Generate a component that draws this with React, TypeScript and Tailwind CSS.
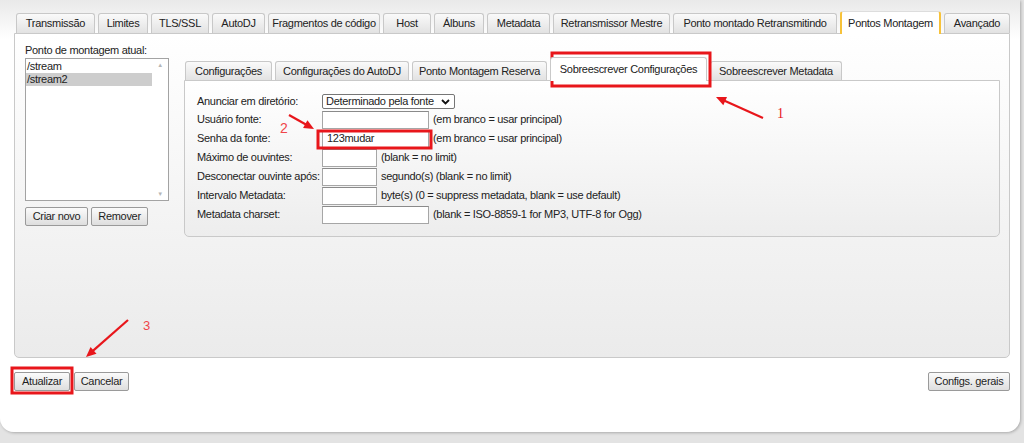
import React from 'react';

const mainTabs = [
  { label: 'Transmissão', w: 79 },
  { label: 'Limites', w: 50 },
  { label: 'TLS/SSL', w: 58 },
  { label: 'AutoDJ', w: 53 },
  { label: 'Fragmentos de código', w: 112 },
  { label: 'Host', w: 48 },
  { label: 'Álbuns', w: 50 },
  { label: 'Metadata', w: 63 },
  { label: 'Retransmissor Mestre', w: 117 },
  { label: 'Ponto montado Retransmitindo', w: 164 },
  { label: 'Pontos Montagem', w: 101, active: true },
  { label: 'Avançado', w: 66 },
];

const subTabs = [
  { label: 'Configurações', w: 87 },
  { label: 'Configurações do AutoDJ', w: 134 },
  { label: 'Ponto Montagem Reserva', w: 135 },
  { label: 'Sobreescrever Configurações', w: 157, active: true },
  { label: 'Sobreescrever Metadata', w: 132 },
];

const rows = [
  { label: 'Usuário fonte:', w: 107, value: '', hint: '(em branco = usar principal)' },
  { label: 'Senha da fonte:', w: 107, value: '123mudar', hint: '(em branco = usar principal)' },
  { label: 'Máximo de ouvintes:', w: 55, value: '', hint: '(blank = no limit)' },
  { label: 'Desconectar ouvinte após:', w: 55, value: '', hint: 'segundo(s) (blank = no limit)' },
  { label: 'Intervalo Metadata:', w: 55, value: '', hint: 'byte(s) (0 = suppress metadata, blank = use default)' },
  { label: 'Metadata charset:', w: 107, value: '', hint: '(blank = ISO-8859-1 for MP3, UTF-8 for Ogg)' },
];

const Btn: React.FC<{ label: string; w: number }> = ({ label, w }) => (
  <button
    style={{ width: w }}
    className="h-[19px] border border-[#9a9a9a] rounded-[2px] bg-linear-to-b from-[#fbfbfb] to-[#dedede] text-[#1e1e1e] leading-none"
  >
    {label}
  </button>
);

// red annotation arrow, head at (x2, y2)
const Arrow: React.FC<{ x1: number; y1: number; x2: number; y2: number }> = ({ x1, y1, x2, y2 }) => {
  const a = Math.atan2(y2 - y1, x2 - x1);
  const len = 11;
  const spread = 0.42;
  const bx = x2 - Math.cos(a) * len * 0.8;
  const by = y2 - Math.sin(a) * len * 0.8;
  const p1 = `${x2 - Math.cos(a - spread) * len},${y2 - Math.sin(a - spread) * len}`;
  const p2 = `${x2 - Math.cos(a + spread) * len},${y2 - Math.sin(a + spread) * len}`;
  return (
    <g>
      <line x1={x1} y1={y1} x2={bx} y2={by} stroke="#e8161b" strokeWidth={2.2} />
      <polygon points={`${x2},${y2} ${p1} ${p2}`} fill="#e8161b" />
    </g>
  );
};

export default function App() {
  return (
    <div className="relative w-[1024px] h-[443px] overflow-hidden bg-[#e3e3e3] font-['Liberation_Sans',Arial,sans-serif] text-[11px] tracking-[-0.3px] text-[#222]">
      <div className="w-[1020px] h-[432px] rounded-b-[14px] bg-linear-to-b from-[#e9e9e9] via-white via-[9%] to-white shadow-[1px_1px_3px_rgba(0,0,0,0.25)]">
        {/* main tabs */}
        <div className="flex items-end pl-[16px] pt-[11px] gap-[3px]">
          {mainTabs.map((t) =>
            t.active ? (
              <div
                key={t.label}
                style={{ width: t.w }}
                className="relative z-10 h-[23px] -mb-px flex items-center justify-center bg-white border-t border-[#ddd] border-x-2 border-x-[#f7c23a] rounded-t-[3px]"
              >
                {t.label}
              </div>
            ) : (
              <div
                key={t.label}
                style={{ width: t.w }}
                className="h-[20px] flex items-center justify-center border border-b-0 border-[#c8c8c8] rounded-t-[3px] bg-linear-to-b from-[#fafafa] to-[#e2e2e2]"
              >
                {t.label}
              </div>
            )
          )}
        </div>

        {/* main panel */}
        <div className="ml-[14px] w-[996px] h-[325px] border border-[#c9c9c9] rounded-b-[5px] bg-linear-to-b from-white to-[#ebebeb] flex pl-[10px] pt-[10px]">
          {/* mount point list */}
          <div className="w-[144px] flex flex-col">
            <div className="h-[14px] leading-[12px]">Ponto de montagem atual:</div>
            <div className="relative h-[143px] border border-[#a3a3a3] bg-white flex">
              <div className="flex-1 pt-[1px]">
                <div className="h-[13px] leading-[12px] pl-[1px]">/stream</div>
                <div className="h-[13px] leading-[12px] pl-[1px] bg-[#cdcdcd]">/stream2</div>
              </div>
              <div className="w-[16px] flex flex-col justify-between items-center py-[3px] text-[#b5b5b5] text-[6px] leading-none">
                <span>▲</span>
                <span>▼</span>
              </div>
            </div>
            <div className="flex gap-[3px] mt-[6px]">
              <Btn label="Criar novo" w={63} />
              <Btn label="Remover" w={57} />
            </div>
          </div>

          {/* override settings */}
          <div className="ml-[15px] mt-[13px] flex flex-col">
            <div className="flex items-end pl-px gap-[3px]">
              {subTabs.map((t) =>
                t.active ? (
                  <div
                    key={t.label}
                    style={{ width: t.w }}
                    className="relative z-10 h-[24px] -mb-px flex items-center justify-center bg-white border border-b-0 border-[#c9c9c9] rounded-t-[3px]"
                  >
                    {t.label}
                  </div>
                ) : (
                  <div
                    key={t.label}
                    style={{ width: t.w }}
                    className="h-[19px] flex items-center justify-center border border-b-0 border-[#c8c8c8] rounded-t-[3px] bg-linear-to-b from-[#fafafa] to-[#e2e2e2]"
                  >
                    {t.label}
                  </div>
                )
              )}
            </div>
            <div className="w-[816px] h-[157px] border border-[#c9c9c9] rounded-b-[5px] bg-linear-to-b from-white to-[#ededed] pl-[12px] pt-[12px]">
              <div className="flex items-center h-[17px]">
                <div className="w-[125px]">Anunciar em diretório:</div>
                <div className="w-[133px] h-[15px] border border-[#767676] rounded-[2px] bg-white flex items-center justify-between pl-[3px] pr-[4px]">
                  <span>Determinado pela fonte</span>
                  <svg width="9" height="6" viewBox="0 0 9 6">
                    <polyline points="1,1 4.5,4.5 8,1" fill="none" stroke="#111" strokeWidth="1.8" />
                  </svg>
                </div>
              </div>
              {rows.map((r) => (
                <div key={r.label} className="flex items-center h-[19px]">
                  <div className="w-[125px]">{r.label}</div>
                  <div
                    style={{ width: r.w }}
                    className="h-[18px] border border-[#a6a6a6] border-t-[#8a8a8a] bg-white pl-[4px] flex items-center"
                  >
                    {r.value}
                  </div>
                  <div className="ml-[4px]">{r.hint}</div>
                </div>
              ))}
            </div>
          </div>
        </div>

        {/* bottom buttons */}
        <div className="flex justify-between px-[14px] mt-[14px] pr-[10px]">
          <div className="flex gap-[4px]">
            <Btn label="Atualizar" w={56} />
            <Btn label="Cancelar" w={55} />
          </div>
          <Btn label="Configs. gerais" w={82} />
        </div>
      </div>

      {/* annotations */}
      <svg className="absolute inset-0 pointer-events-none" width="1024" height="443">
        <rect x="552" y="53" width="158" height="33" fill="none" stroke="#e8161b" strokeWidth="3" />
        <rect x="318" y="131" width="113" height="17" fill="none" stroke="#e8161b" strokeWidth="3" />
        <rect x="12" y="368" width="60" height="25" fill="none" stroke="#e8161b" strokeWidth="3" />
        <Arrow x1={763} y1={118} x2={716} y2={97} />
        <Arrow x1={289} y1={115} x2={314} y2={129} />
        <Arrow x1={128} y1={320} x2={86} y2={357} />
      </svg>
      <span className="absolute left-[777px] top-[103px] text-[14px] text-[#e8161b] font-['Liberation_Serif',serif] tracking-normal">1</span>
      <span className="absolute left-[280px] top-[118px] text-[14px] text-[#f0454a] tracking-normal">2</span>
      <span className="absolute left-[143px] top-[316px] text-[13px] text-[#f0454a] tracking-normal">3</span>
    </div>
  );
}
